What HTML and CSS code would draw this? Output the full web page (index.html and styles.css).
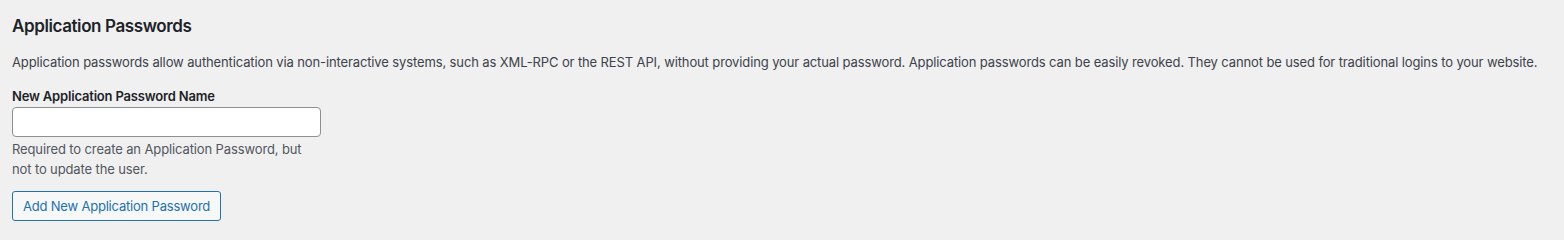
FILE: index.html
```html
<!DOCTYPE html>
<html lang="en">
<head>
<meta charset="utf-8">
<title>Application Passwords</title>
<link rel="stylesheet" href="styles.css">
</head>
<body>
<section class="app-passwords">
  <h2 class="title">Application Passwords</h2>
  <p class="intro">Application passwords allow authentication via non-interactive systems, such as XML-RPC or the REST API, without providing your actual password. Application passwords can be easily revoked. They cannot be used for traditional logins to your website.</p>
  <div class="field">
    <label class="field-label" for="new_application_password_name">New Application Password Name</label>
    <input class="text-input" type="text" id="new_application_password_name">
    <p class="description">Required to create an Application Password, but not to update the user.</p>
  </div>
  <button class="button" type="button">Add New Application Password</button>
</section>
</body>
</html>
```

FILE: styles.css
```css
html, body {
  margin: 0;
  padding: 0;
  background: #f0f0f1;
}
body {
  font-family: Inter, "Noto Sans", sans-serif;
  font-size: 13px;
  line-height: 1.4;
  letter-spacing: -0.12px;
  color: #3c434a;
  width: 1564px;
  height: 235px;
  overflow: hidden;
}
.app-passwords {
  padding: 0 12px;
}
.title {
  margin: 0;
  padding-top: 16px;
  font-size: 17px;
  font-weight: 600;
  line-height: 20px;
  letter-spacing: -0.4px;
  color: #1d2327;
}
.intro {
  margin: 16px 0 0;
  line-height: 20px;
  white-space: nowrap;
}
.field {
  margin-top: 14px;
  width: 310px;
}
.field-label {
  display: block;
  font-weight: 600;
  color: #1d2327;
  font-size: 13px;
  line-height: 20px;
  letter-spacing: -0.18px;
}
.text-input {
  display: block;
  box-sizing: border-box;
  width: 309px;
  height: 30px;
  margin: 1px 0 0;
  padding: 0 8px;
  border: 1px solid #8c8f94;
  border-radius: 4px;
  background: #fff;
  font: inherit;
}
.description {
  margin: 2px 0 0;
  line-height: 20px;
  color: #50575e;
}
.button {
  display: block;
  margin-top: 12px;
  box-sizing: border-box;
  height: 30px;
  padding: 0 10px;
  border: 1px solid #2271b1;
  border-radius: 3px;
  background: #f6f7f7;
  color: #2271b1;
  font: inherit;
  letter-spacing: -0.2px;
  line-height: 28px;
}
```
